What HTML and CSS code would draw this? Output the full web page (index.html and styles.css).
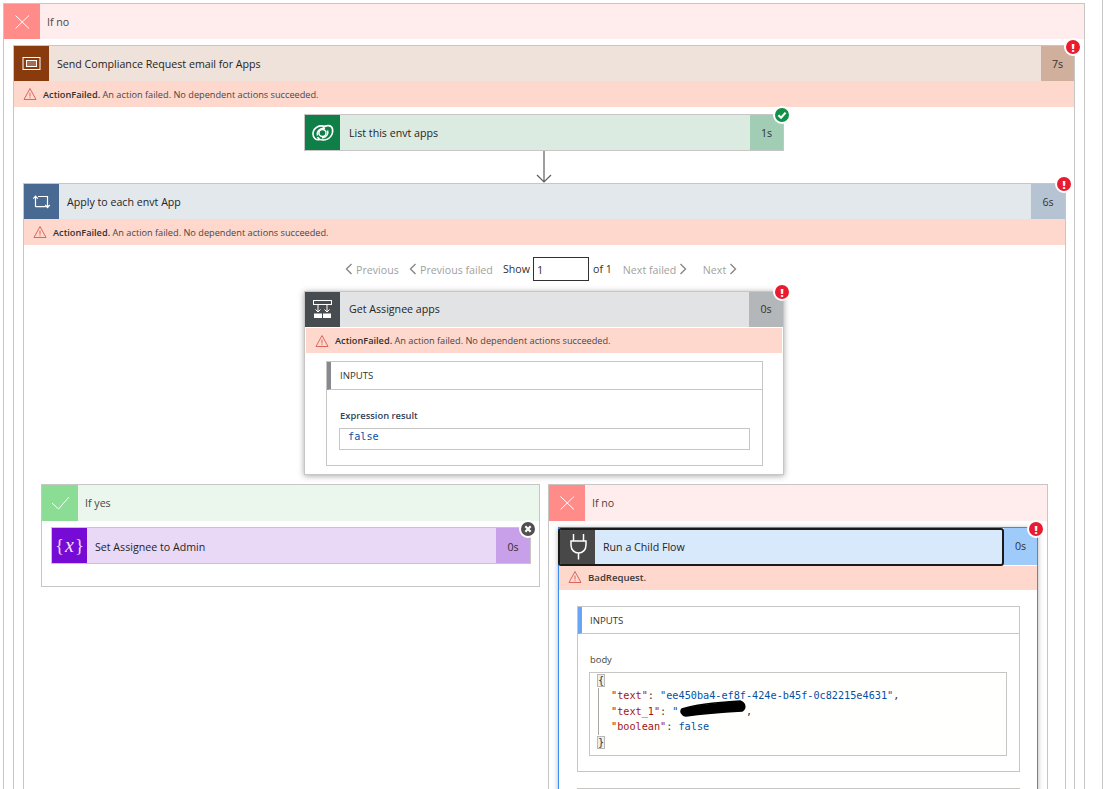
FILE: index.html
```html
<!DOCTYPE html>
<html lang="en">
<head>
<meta charset="utf-8">
<title>Flow run</title>
<link rel="stylesheet" href="styles.css">
</head>
<body>
<main class="canvas">
  <section class="scope outer">
    <header class="branch-head no">
      <span class="branch-icon"><svg viewBox="0 0 36 35"><path d="M11.500 11.500 25 24.500M25 11.500 11.500 24.500"/></svg></span>
      <span class="branch-title">If no</span>
    </header>
    <div class="scope-body">
      <section class="scope send">
        <header class="action tone-brown">
          <span class="action-icon"><svg viewBox="0 0 35 35"><rect x="9" y="11.500" width="17" height="12"/><rect class="fillsoft" x="12.500" y="14.500" width="10" height="6"/></svg></span>
          <span class="action-title">Send Compliance Request email for Apps</span>
          <span class="duration">7s</span>
          <span class="badge err">!</span>
        </header>
        <div class="error-bar">
          <svg class="warn" viewBox="0 0 14 14"><path d="M7 1.500 13 12.500H1ZM7 5.500V9.500M7 10.300V11.300"/></svg>
          <span><b>ActionFailed.</b> An action failed. No dependent actions succeeded.</span>
        </div>
        <div class="send-body">
          <div class="action card tone-green">
            <span class="action-icon"><svg viewBox="0 0 35 35"><path class="thick" d="M20 11.500C14 9.500 8 13 8 19 8 23 11 25.500 15 24.500"/><path class="thick" d="M18 12.500C21 10 26.500 9.500 27.500 14 28.500 19 25 25 18 25 15.500 25 13.500 24 12.500 22"/><path class="thick" d="M12.500 20.500C11.500 15.500 16 12.500 20 13.500M22.500 15.500C24 19 21 22.500 17 23"/><circle class="hub" cx="17.500" cy="18" r="3.500"/></svg></span>
            <span class="action-title">List this envt apps</span>
            <span class="duration">1s</span>
            <span class="badge ok"><svg viewBox="0 0 10 10"><path d="M2 5.200 4.200 7.200 8 3"/></svg></span>
          </div>
          <svg class="arrow" viewBox="0 0 18 32"><path d="M9 0V31M2 24 9 31 16 24"/></svg>
          <section class="scope apply">
            <header class="action tone-blue">
              <span class="action-icon"><svg class="loop" viewBox="0 0 35 35"><path d="M11.500 22.700V12.500M14 12.500H23.500V23.500M11.500 22.700H21.500M9.300 14.700 11.500 12.200 13.700 14.700M21.200 21 23.500 23.500 25.800 21"/></svg></span>
              <span class="action-title">Apply to each envt App</span>
              <span class="duration">6s</span>
              <span class="badge err">!</span>
            </header>
            <div class="error-bar">
              <svg class="warn" viewBox="0 0 14 14"><path d="M7 1.500 13 12.500H1ZM7 5.500V9.500M7 10.300V11.300"/></svg>
              <span><b>ActionFailed.</b> An action failed. No dependent actions succeeded.</span>
            </div>
            <div class="apply-body">
              <nav class="pager">
                <span class="pager-link pl-prev"><svg class="chev" viewBox="0 0 8 12"><path d="M6.500 1 1.500 6 6.500 11"/></svg>Previous</span>
                <span class="pager-link pl-prevf"><svg class="chev" viewBox="0 0 8 12"><path d="M6.500 1 1.500 6 6.500 11"/></svg>Previous failed</span>
                <span class="pager-show">Show</span>
                <span class="pager-input">1</span>
                <span class="pager-show">of 1</span>
                <span class="pager-link pl-nextf">Next failed<svg class="chev" viewBox="0 0 8 12"><path d="M1.500 1 6.500 6 1.500 11"/></svg></span>
                <span class="pager-link pl-next">Next<svg class="chev" viewBox="0 0 8 12"><path d="M1.500 1 6.500 6 1.500 11"/></svg></span>
              </nav>
              <article class="expanded gray">
                <div class="action tone-gray">
                  <span class="action-icon"><svg viewBox="0 0 35 35"><rect x="8.500" y="8.500" width="18" height="4"/><path d="M13 12.500V20M22 12.500V20M10.500 17.500 13 20 15.500 17.500M19.500 17.500 22 20 24.500 17.500"/><rect class="fillsolid" x="9" y="21.500" width="8" height="4.500"/><rect class="fillsolid" x="18" y="21.500" width="8" height="4.500"/></svg></span>
                  <span class="action-title">Get Assignee apps</span>
                  <span class="duration">0s</span>
                  <span class="badge err">!</span>
                </div>
                <div class="error-bar">
                  <svg class="warn" viewBox="0 0 14 14"><path d="M7 1.500 13 12.500H1ZM7 5.500V9.500M7 10.300V11.300"/></svg>
                  <span><b>ActionFailed.</b> An action failed. No dependent actions succeeded.</span>
                </div>
                <div class="io io-gray">
                  <div class="io-head">INPUTS</div>
                  <div class="io-body">
                    <div class="io-label">Expression result</div>
                    <div class="io-value">false</div>
                  </div>
                </div>
              </article>
              <div class="branches">
                <section class="scope branch-yes">
                  <header class="branch-head yes">
                    <span class="branch-icon"><svg viewBox="0 0 36 35"><path d="M10 18 16.500 24 27 12"/></svg></span>
                    <span class="branch-title">If yes</span>
                  </header>
                  <div class="yes-body">
                    <div class="action card tone-purple">
                      <span class="action-icon var-icon"><span class="brace">{</span><i>x</i><span class="brace">}</span></span>
                      <span class="action-title">Set Assignee to Admin</span>
                      <span class="duration">0s</span>
                      <span class="badge skip"><svg viewBox="0 0 10 10"><path d="M2.800 2.800 7.200 7.200M7.200 2.800 2.800 7.200"/></svg></span>
                    </div>
                  </div>
                </section>
                <section class="scope branch-no">
                  <header class="branch-head no">
                    <span class="branch-icon"><svg viewBox="0 0 36 35"><path d="M11.500 11.500 25 24.500M25 11.500 11.500 24.500"/></svg></span>
                    <span class="branch-title">If no</span>
                  </header>
                  <div class="no-body">
                    <article class="expanded selected">
                      <div class="action tone-sky">
                        <div class="focus-part">
                          <span class="action-icon"><svg class="plug" viewBox="0 0 35 35"><path d="M13.500 4V11M23.500 4V11M11 11H26V15C26 20 22.500 23 18.500 23 14.500 23 11 20 11 15ZM18.500 23V29.500"/></svg></span>
                          <span class="action-title">Run a Child Flow</span>
                        </div>
                        <span class="duration">0s</span>
                        <span class="badge err">!</span>
                      </div>
                      <div class="error-bar">
                        <svg class="warn" viewBox="0 0 14 14"><path d="M7 1.500 13 12.500H1ZM7 5.500V9.500M7 10.300V11.300"/></svg>
                        <span class="plain-err">BadRequest.</span>
                      </div>
                      <div class="io io-blue">
                        <div class="io-head">INPUTS</div>
                        <div class="io-body">
                          <div class="io-label plain">body</div>
                          <div class="code">
                            <div class="code-line"><span class="match">{</span></div>
                            <div class="code-inner">
                              <div class="code-line"><span class="key">"text"</span>: <span class="str">"ee450ba4-ef8f-424e-b45f-0c82215e4631"</span>,</div>
                              <div class="code-line"><span class="key">"text_1"</span>: <span class="str">"           </span>,</div>
                              <div class="code-line"><span class="key">"boolean"</span>: <span class="str">false</span></div>
                              <svg class="scribble" viewBox="0 0 66 17"><path d="M2 9C14 5 44 2 60 1 66 3 66 9 62 11 44 12 20 14 6 16 1 15 0 11 2 9Z"/></svg>
                            </div>
                            <div class="code-line"><span class="match">}</span></div>
                          </div>
                        </div>
                      </div>
                      <div class="io io-next">
                        <div class="io-head"></div>
                      </div>
                    </article>
                  </div>
                </section>
              </div>
            </div>
          </section>
        </div>
      </section>
    </div>
  </section>
</main>
</body>
</html>
```

FILE: styles.css
```css
* { box-sizing: border-box; }
html, body { margin: 0; padding: 0; background: #fff; }
body {
  height: 789px;
  overflow: hidden;
  font-family: "Open Sans", "Noto Sans", sans-serif;
  font-size: 10.65px;
  color: #252423;
}
svg { display: block; fill: none; stroke: #fff; stroke-width: 1; }

.canvas {
  width: 1103px;
  height: 789px;
  padding: 3px 0 0 3px;
  border-right: 1px solid #c8c6c4;
  overflow: hidden;
}

.scope { border: 1px solid #c8c6c4; background: #fff; position: relative; }
.outer { width: 1082px; min-height: 900px; }
.scope-body { padding: 6px 9px 0; }
.send { min-height: 800px; }
.send-body { padding: 7px 8px 0 9px; }
.send-body > .card { margin-left: 281px; }
.arrow { width: 18px; height: 32px; margin-left: 512px; stroke: #605e5c; stroke-width: 1.2; }
.apply { min-height: 700px; }

.branch-head { display: flex; align-items: center; height: 35px; }
.branches .branch-head { height: 36px; }
.branch-head.no { background: #ffeded; }
.branch-head.yes { background: #ebf6ed; }
.branch-icon { width: 36px; height: 35px; flex: none; }
.no .branch-icon { background: #ff8c88; }
.yes .branch-icon { background: #8bdc95; }
.branches .branch-icon { height: 36px; }
.branch-title { margin-left: 7px; font-size: 10.65px; color: #484644; }

.action { display: flex; align-items: stretch; height: 35px; position: relative; }
.action-icon { width: 35px; height: 35px; flex: none; display: block; }
.action-title { flex: 1; margin-left: 8px; line-height: 37px; white-space: nowrap; }
.duration { width: 34px; flex: none; line-height: 37px; text-align: center; color: #323130; }
.card { width: 480px; height: 37px; border: 1px solid #c8c6c4; }

.tone-brown { background: #efe2da; }
.tone-brown .action-icon { background: #8a3b0e; }
.tone-brown .duration { background: #d0af9c; width: 33px; }
.tone-green { background: #dcebe2; }
.tone-green .action-icon { background: #0f7f47; }
.tone-green .action-title, .tone-gray .action-title { margin-left: 9px; }
.tone-green .duration { background: #a1cdb4; width: 33px; }
.tone-blue { background: #e3e8ec; }
.tone-blue .action-icon { background: #486991; }
.tone-blue .duration { background: #b6c3d2; }
.tone-gray { background: #e2e3e5; }
.tone-gray .action-icon { background: #474c51; }
.tone-gray .duration { background: #b4b7b9; }
.tone-gray .action-title, .tone-gray .duration { line-height: 35px; }
.tone-purple { background: #e9d9f7; }
.tone-purple .action-icon { background: #770bd6; }
.tone-purple .duration { background: #c89fe9; }
.tone-purple .action-title, .tone-purple .duration { line-height: 38px; }
.tone-sky { background: #d8e9fc; }
.tone-sky .action-icon { background: #484848; }
.tone-sky .duration { background: #9fcbfb; width: 33px; }

.fillsoft { fill: rgba(255,255,255,.25); }
.fillsolid { fill: #fff; stroke: none; }
.thick { stroke-width: 1.6; }
.loop { stroke-width: 1.2; }
.plug { stroke-width: 1.5; }
.hub { fill: #0f7f47; stroke: #fff; stroke-width: 1.4; }

.badge {
  position: absolute;
  top: -9px;
  right: -8px;
  width: 18px;
  height: 18px;
  border: 2px solid #fff;
  border-radius: 50%;
  display: flex;
  align-items: center;
  justify-content: center;
  color: #fff;
  font-weight: 800;
  font-size: 11px;
  line-height: 1;
}
.tone-brown .badge { top: -8px; }
.tone-purple .badge { top: -8px; right: -7px; }
.badge svg { width: 12px; height: 12px; stroke-width: 1.8; }
.badge.err { background: #e81c2e; }
.badge.ok { background: #0f9148; }
.badge.skip { background: #505050; }

.error-bar {
  height: 26px;
  background: #fed8cc;
  display: flex;
  align-items: center;
  padding-left: 9px;
  font-size: 9.2px;
  color: #484644;
}
.error-bar b { font-weight: 600; color: #323130; }
.warn { width: 14px; height: 14px; margin-right: 6px; stroke: #d9675d; flex: none; }
.plain-err { font-size: 9.6px; font-weight: 600; color: #3b3a39; }

.pager {
  height: 46px;
  padding: 2px 0 0 321px;
  display: flex;
  align-items: center;
  color: #a19f9d;
  white-space: nowrap;
}
.pager-link { display: flex; align-items: center; gap: 3px; padding-top: 2px; }
.chev { width: 8px; height: 12px; stroke: #8a8886; stroke-width: 1.4; margin-top: -2px; }
.pl-prev { width: 64px; }
.pl-prevf { width: 94px; }
.pl-nextf { margin-left: 11px; width: 80px; }
.pager-show { color: #323130; }
.pager-input {
  width: 56px;
  height: 24px;
  border: 1px solid #323130;
  margin: 0 4px 0 3px;
  padding-left: 3px;
  line-height: 24px;
  color: #323130;
  font-size: 11px;
}

.expanded { width: 480px; margin-left: 280px; position: relative; box-shadow: 0 1px 6px rgba(0,0,0,.35); background: #fff; }
.expanded.gray { border: 1px solid #c8c6c4; height: 184px; }
.expanded.gray > .error-bar { margin: 1px 1px 0; padding-left: 9px; height: 25px; }

.io { border: 1px solid #c8c6c4; margin: 8px 20px 0 21px; }
.io-head {
  height: 28px;
  border-bottom: 1px solid #c8c6c4;
  border-left: 4px solid #868a8e;
  line-height: 28px;
  padding-left: 9px;
  font-size: 9.6px;
  color: #323130;
}
.io-blue .io-head { height: 27px; border-left-color: #6aa5f5; padding-left: 8px; }
.io-body { padding: 19px 12px 15px; }
.io-label { font-size: 9.4px; font-weight: 600; color: #30425a; line-height: 13px; padding-left: 1px; }
.io-label.plain { color: #484644; font-weight: 400; padding-left: 1px; }
.io-value {
  margin-top: 6px;
  height: 22px;
  border: 1px solid #c8c6c4;
  padding-left: 8px;
  font-family: "DejaVu Sans Mono", monospace;
  font-size: 10.2px;
  line-height: 16px;
  color: #0451a5;
}

.branches { display: flex; gap: 8px; padding: 9px 17px 0; align-items: flex-start; }
.branch-yes { width: 499px; height: 103px; }
.branch-no { width: 500px; min-height: 400px; }
.yes-body { padding: 6px 0 0 9px; }
.no-body { padding: 6px 9px 0; }

.selected { border: 1px solid #3b8cf0; width: 480px; margin-left: 0; min-height: 300px; box-shadow: 0 1px 5px rgba(0,0,0,.3); }
.selected .tone-sky { height: 37px; background: #fff; }
.focus-part {
  flex: 1;
  display: flex;
  background: #d8e9fc;
  border: 2px solid #1b1a19;
  border-radius: 3px;
  height: 38px;
  overflow: hidden;
  margin-left: -1px;
}
.selected .duration { height: 37px; line-height: 37px; }
.selected .action-icon { height: 34px; }
.selected .action-title { line-height: 35px; }
.selected .error-bar { margin-top: 1px; height: 24px; padding: 0 0 2px 9px; }
.selected .badge { top: -8px; }
.io-blue { margin: 16px 17px 0 18px; }
.io-blue .io-body { padding: 19px 12px 15px 11px; }
.io-next { margin: 16px 17px 0 18px; }
.io-next .io-head { border-left: none; }

.code {
  margin-top: 6px;
  height: 84px;
  border: 1px solid #c8c6c4;
  padding: 0 0 0 8px;
  font-family: "DejaVu Sans Mono", monospace;
  font-size: 10.2px;
  color: #383838;
  background: #fffffe;
}
.code-line { height: 15.4px; line-height: 15.4px; white-space: pre; }
.code-inner { border-left: 1px solid #a8a8a8; padding-left: 12px; position: relative; }
.match { outline: 1px solid #b8b8b8; background: #f0f0e8; }
.key { color: #a31515; }
.str { color: #0451a5; }
.scribble {
  position: absolute;
  left: 81px;
  top: 12px;
  width: 66px;
  height: 17px;
  stroke: #000;
  stroke-width: 1.5;
  fill: #000;
}

.var-icon {
  display: flex;
  align-items: center;
  justify-content: center;
  color: #fff;
  font-family: "Liberation Serif", serif;
}
.var-icon i { font-size: 20px; margin: 0 1px; color: rgba(255,255,255,.9); }
.brace { font-size: 19px; line-height: 1; color: rgba(255,255,255,.85); }
```
